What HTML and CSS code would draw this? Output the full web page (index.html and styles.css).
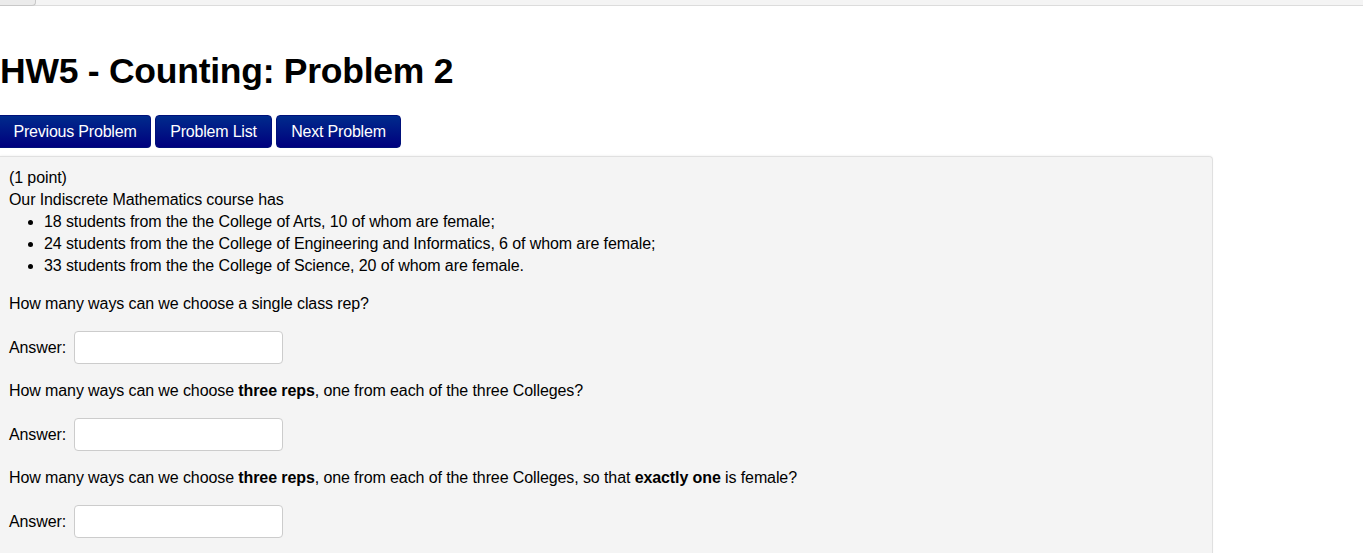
FILE: index.html
```html
<!DOCTYPE html>
<html>
<head>
<meta charset="utf-8">
<title>HW5 - Counting: Problem 2</title>
<link rel="stylesheet" href="styles.css">
</head>
<body>
<div class="topbar"><div class="tab"></div></div>
<h1 class="title">HW5 - Counting: Problem 2</h1>
<div class="nav">
  <a class="btn btn-prev">Previous Problem</a>
  <a class="btn btn-list">Problem List</a>
  <a class="btn btn-next">Next Problem</a>
</div>
<div class="problem">
  <div class="intro">(1 point)<br>Our Indiscrete Mathematics course has</div>
  <ul class="list">
    <li>18 students from the the College of Arts, 10 of whom are female;</li>
    <li>24 students from the the College of Engineering and Informatics, 6 of whom are female;</li>
    <li>33 students from the the College of Science, 20 of whom are female.</li>
  </ul>
  <p class="q">How many ways can we choose a single class rep?</p>
  <div class="answer"><span class="label">Answer:</span><input class="field" type="text"></div>
  <p class="q">How many ways can we choose <b>three reps</b>, one from each of the three Colleges?</p>
  <div class="answer"><span class="label">Answer:</span><input class="field" type="text"></div>
  <p class="q">How many ways can we choose <b>three reps</b>, one from each of the three Colleges, so that <b>exactly one</b> is female?</p>
  <div class="answer"><span class="label">Answer:</span><input class="field" type="text"></div>
</div>
</body>
</html>
```
FILE: styles.css
```css
html, body {
  margin: 0;
  padding: 0;
  background: #ffffff;
  font-family: "Liberation Sans", Arial, sans-serif;
  color: #000;
}
.topbar {
  height: 5px;
  background: #f4f4f4;
  border-bottom: 1px solid #dcdcdc;
}
.tab {
  width: 35px;
  height: 5px;
  background: #ebebeb;
  border-right: 1px solid #c8c8c8;
  border-bottom: 1px solid #c8c8c8;
  border-bottom-right-radius: 4px;
}
.title {
  font-size: 35.5px;
  font-weight: bold;
  margin: 45px 0 0 0;
  line-height: 41px;
  letter-spacing: -0.25px;
}
.nav {
  display: flex;
  gap: 4px;
  margin-top: 23px;
}
.btn {
  display: flex;
  align-items: center;
  justify-content: center;
  height: 31px;
  border: 1px solid #00107a;
  border-radius: 4px;
  background: linear-gradient(#002b8c, #00007e);
  color: #fff;
  font-size: 16px;
  letter-spacing: -0.2px;
  text-decoration: none;
}
.btn-prev { width: 150px; border-top-left-radius: 0; border-bottom-left-radius: 0; border-left: none; }
.btn-list { width: 115px; }
.btn-next { width: 123px; }
.problem {
  margin-top: 8px;
  width: 1203px;
  background: #f4f4f4;
  border: 1px solid #e0e0e0;
  border-left: none;
  border-bottom: none;
  border-top-right-radius: 4px;
  box-shadow: 0 -1px 2px rgba(0,0,0,0.04);
  padding: 10px 0 12px 9px;
  font-size: 16px;
  line-height: 22px;
  letter-spacing: -0.1px;
  min-height: 400px;
}
.intro { margin: 0; }
.list {
  margin: 0;
  padding-left: 35px;
}
.q {
  margin: 16px 0 16px 0;
}
.answer {
  display: flex;
  align-items: center;
  gap: 8px;
  height: 33px;
}
.label { line-height: 22px; }
.field {
  box-sizing: border-box;
  height: 33px;
  width: 209px;
  border: 1px solid #cccccc;
  border-radius: 4px;
  background: #fff;
  margin: 0;
  padding: 0 6px;
  font-size: 16px;
}
```
